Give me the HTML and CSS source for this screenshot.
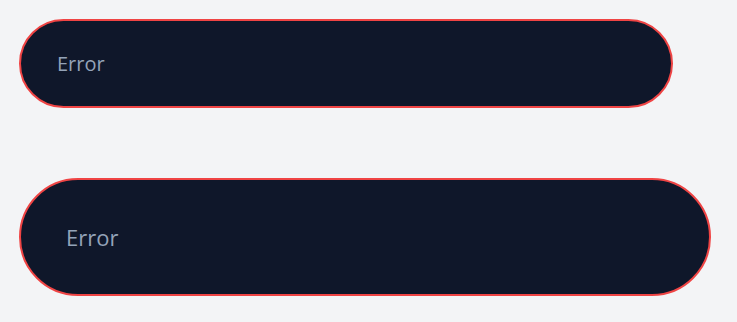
FILE: index.html
```html
<!DOCTYPE html>
<html>
<head>
<meta charset="utf-8">
<link rel="stylesheet" href="styles.css">
</head>
<body>
<div class="stack">
  <div class="field field-md"><span class="label">Error</span></div>
  <div class="field field-lg"><span class="label">Error</span></div>
</div>
</body>
</html>
```
FILE: styles.css
```css
html, body {
  margin: 0;
  padding: 0;
  background: #f3f4f6;
}
body {
  font-family: "Open Sans", "Noto Sans", sans-serif;
}
.stack {
  display: flex;
  flex-direction: column;
  align-items: flex-start;
  gap: 70px;
  padding: 19px;
}
.field {
  box-sizing: border-box;
  display: flex;
  align-items: center;
  background: #0f172a;
  border: 2px solid #ef4444;
  border-radius: 9999px;
  color: #94a3b8;
}
.field-md {
  width: 654px;
  height: 89px;
  padding-left: 36px;
  font-size: 20px;
}
.field-lg {
  width: 692px;
  height: 118px;
  padding-left: 45px;
  font-size: 22px;
}
.label {
  line-height: 1;
}
```
